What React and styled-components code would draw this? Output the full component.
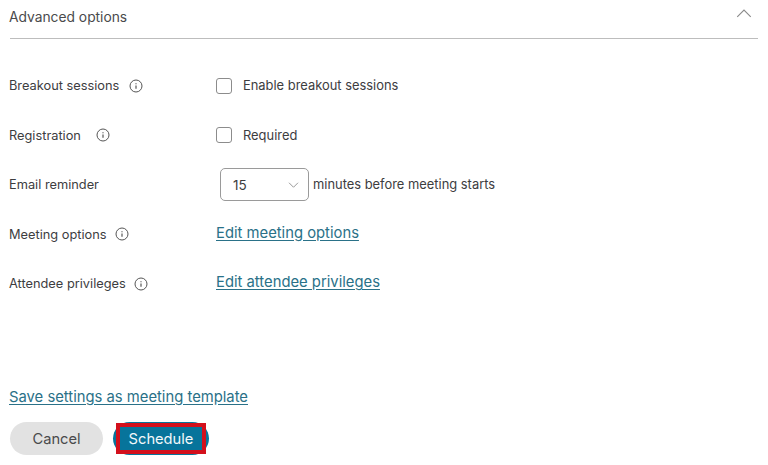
import React from "react";
import styled, { createGlobalStyle } from "styled-components";

const GlobalStyle = createGlobalStyle`
  html, body {
    margin: 0;
    background: #fff;
  }
  body {
    font-family: Inter, "Noto Sans", "Liberation Sans", sans-serif;
    color: #3d3d3f;
  }
`;

const Page = styled.div`
  width: 768px;
  height: 465px;
  box-sizing: border-box;
  padding: 0 10px 10px 9px;
  display: flex;
  flex-direction: column;
  overflow: hidden;
`;

const Header = styled.div`
  height: 39px;
  display: flex;
  align-items: center;
  justify-content: space-between;
  margin-left: 1px;
  padding: 0 6px 4px 0;
  box-sizing: border-box;
  border-bottom: 1px solid #bdbdbd;
`;

const HeaderTitle = styled.span`
  font-size: 13.8px;
  margin-left: -1px;
  color: #4a4a4c;
`;

const Rows = styled.div`
  margin-top: 22px;
  display: flex;
  flex-direction: column;
`;

const Row = styled.div`
  height: 49.5px;
  display: grid;
  grid-template-columns: 207px 1fr;
  align-items: center;
`;

const Label = styled.div`
  display: flex;
  align-items: center;
  gap: ${(p) => p.$gap || 10}px;
  font-size: 12.8px;
`;

const Control = styled.div`
  display: flex;
  align-items: center;
`;

const CheckBox = styled.span`
  width: 16px;
  height: 16px;
  box-sizing: border-box;
  border: 1px solid #8c8c8c;
  border-radius: 3px;
  margin-right: 11px;
`;

const ControlText = styled.span`
  font-size: 12.9px;
`;

const SelectBox = styled.div`
  width: 89px;
  height: 33px;
  margin-left: 4px;
  margin-right: 4px;
  box-sizing: border-box;
  border: 1px solid #9a9a9a;
  border-radius: 5px;
  padding: 0 9px 0 12px;
  display: flex;
  align-items: center;
  justify-content: space-between;
  font-size: 13.5px;
`;

const TextLink = styled.a`
  font-size: 14.8px;
  color: #2a7188;
  text-decoration: underline;
  text-underline-offset: 2px;
  cursor: pointer;
`;

const RowLink = styled(TextLink)`
  margin-top: -3px;
`;

const Footer = styled.div`
  margin-top: auto;
  display: flex;
  flex-direction: column;
  align-items: flex-start;
  gap: 16px;
`;

const Buttons = styled.div`
  display: flex;
  gap: 10px;
  margin-left: 1px;
`;

const Pill = styled.button`
  height: 33px;
  border: 0;
  border-radius: 17px;
  font-family: inherit;
  font-size: 14.7px;
  padding: 0;
  position: relative;
`;

const CancelButton = styled(Pill)`
  width: 93px;
  background: #e2e2e2;
  color: #4a4a4c;
`;

const ScheduleButton = styled(Pill)`
  width: 96px;
  background: #07749b;
  color: #f2f8fa;
`;

// red box drawn over the button in the screenshot
const Highlight = styled.span`
  position: absolute;
  left: 3px;
  right: 3px;
  top: 1px;
  bottom: 1px;
  border: 4px solid #d3101c;
`;

const Info = () => (
  <svg width="14" height="14" viewBox="0 0 14 14" fill="none" stroke="#555" strokeWidth="1">
    <circle cx="7" cy="7" r="6" />
    <path d="M7 6.4v3.4" strokeWidth="1.2" />
    <path d="M7 4.2v1" strokeWidth="1.2" />
  </svg>
);

const Chevron = ({ width, height, color }) => (
  <svg width={width} height={height} viewBox="0 0 14 8" fill="none" stroke={color} strokeWidth="1">
    <path d="M1 1l6 6 6-6" />
  </svg>
);

const ChevronUp = styled.span`
  display: flex;
  transform: rotate(180deg);
  margin-bottom: 8px;
`;

const App = () => {
  return (
    <Page>
      <GlobalStyle />
      <Header>
        <HeaderTitle>Advanced options</HeaderTitle>
        <ChevronUp>
          <Chevron width={16} height={9} color="#8a8a8a" />
        </ChevronUp>
      </Header>
      <Rows>
        <Row>
          <Label>
            Breakout sessions <Info />
          </Label>
          <Control>
            <CheckBox />
            <ControlText>Enable breakout sessions</ControlText>
          </Control>
        </Row>
        <Row>
          <Label $gap={15}>
            Registration <Info />
          </Label>
          <Control>
            <CheckBox />
            <ControlText>Required</ControlText>
          </Control>
        </Row>
        <Row>
          <Label>Email reminder</Label>
          <Control>
            <SelectBox>
              15
              <Chevron width={11} height={6} color="#777" />
            </SelectBox>
            <ControlText>minutes before meeting starts</ControlText>
          </Control>
        </Row>
        <Row>
          <Label $gap={8}>
            Meeting options <Info />
          </Label>
          <Control>
            <RowLink>Edit meeting options</RowLink>
          </Control>
        </Row>
        <Row>
          <Label $gap={8}>
            Attendee privileges <Info />
          </Label>
          <Control>
            <RowLink>Edit attendee privileges</RowLink>
          </Control>
        </Row>
      </Rows>
      <Footer>
        <TextLink>Save settings as meeting template</TextLink>
        <Buttons>
          <CancelButton>Cancel</CancelButton>
          <ScheduleButton>
            Schedule
            <Highlight />
          </ScheduleButton>
        </Buttons>
      </Footer>
    </Page>
  );
};

export default App;
